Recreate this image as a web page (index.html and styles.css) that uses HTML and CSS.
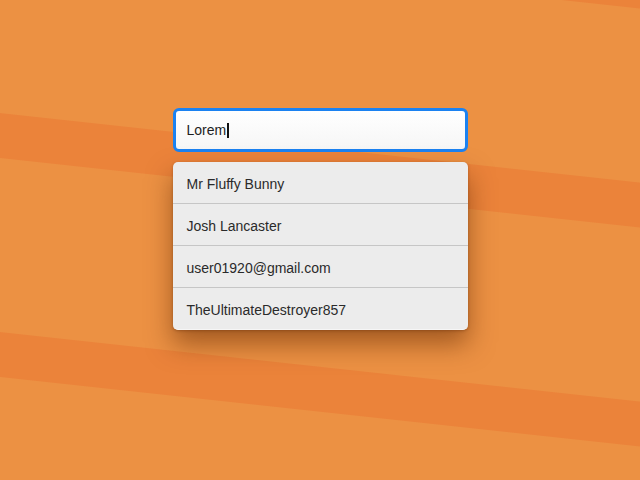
FILE: index.html
```html
<!DOCTYPE html>
<html>
<head>
<meta charset="utf-8">
<link rel="stylesheet" href="styles.css">
</head>
<body>
<div class="page">
  <div class="combo">
    <div class="field"><span class="value">Lorem</span><span class="caret"></span></div>
    <ul class="list">
      <li class="item">Mr Fluffy Bunny</li>
      <li class="item">Josh Lancaster</li>
      <li class="item">user01920@gmail.com</li>
      <li class="item">TheUltimateDestroyer857</li>
    </ul>
  </div>
</div>
</body>
</html>
```
FILE: styles.css
```css
html, body {
  margin: 0;
  padding: 0;
}
body {
  width: 640px;
  height: 480px;
  overflow: hidden;
  font-family: "Liberation Sans", Arial, sans-serif;
  background-color: #ec9143;
  background-image: repeating-linear-gradient(186.2deg,
    #eb833a 0px, #eb833a 8px, #ec9143 9px, #ec9143 181px,
    #eb833a 182px, #eb833a 217.7px);
}
.page {
  height: 480px;
  display: flex;
  justify-content: center;
  padding-top: 108px;
  box-sizing: border-box;
}
.combo {
  width: 295px;
}
.field {
  height: 44px;
  box-sizing: border-box;
  border: 3px solid #1b82f1;
  border-radius: 6px;
  background: linear-gradient(#ffffff, #f6f6f6);
  padding-left: 11px;
  display: flex;
  align-items: center;
  font-size: 14px;
  color: #1e1e1e;
}
.caret {
  display: inline-block;
  width: 1.5px;
  height: 15px;
  background: #111;
  margin-left: 1px;
}
.list {
  list-style: none;
  margin: 10px 0 0 0;
  padding: 0;
  background: #ececec;
  border-radius: 5px;
  box-shadow: 0 14px 26px rgba(90, 35, 0, 0.5), 0 1px 3px rgba(90, 35, 0, 0.35);
  overflow: hidden;
  border-bottom: 1px solid #f6f6f6;
}
.item {
  height: 42px;
  box-sizing: border-box;
  padding: 2px 0 0 14px;
  display: flex;
  align-items: center;
  font-size: 14px;
  color: #2a2a2a;
  border-bottom: 1px solid #c6c6c6;
}
.item:last-child {
  border-bottom: none;
  height: 41px;
}
```
